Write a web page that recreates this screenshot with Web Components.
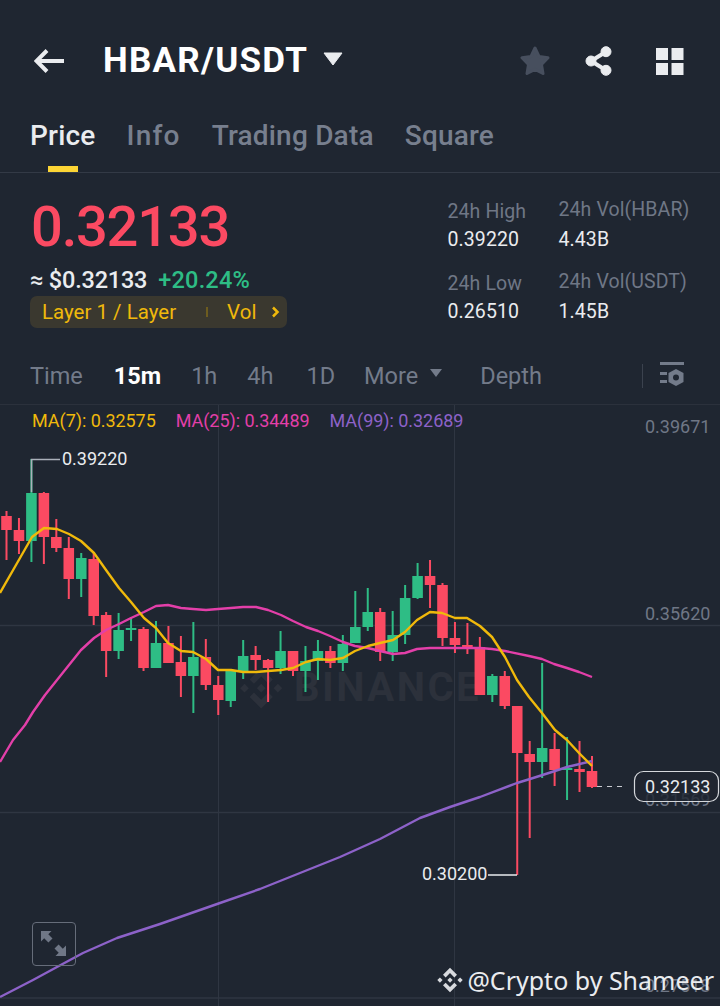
<!DOCTYPE html>
<html lang="en">
<head>
<meta charset="utf-8">
<title>HBAR/USDT</title>
<style>
  html, body { margin: 0; background: #1f2631; }
  body { width: 720px; height: 1006px; overflow: hidden; font-family: Roboto, "Noto Sans", sans-serif; }
</style>
</head>
<body>
<pair-header pair="HBAR/USDT"></pair-header>
<pair-tabs>
  <tab-item active>Price</tab-item>
  <tab-item class="wide">Info</tab-item>
  <tab-item>Trading Data</tab-item>
  <tab-item>Square</tab-item>
</pair-tabs>
<ticker-panel>
  <stat-cell label="24h High" value="0.39220"></stat-cell>
  <stat-cell label="24h Vol(HBAR)" value="4.43B" shift></stat-cell>
  <stat-cell label="24h Low" value="0.26510"></stat-cell>
  <stat-cell label="24h Vol(USDT)" value="1.45B" shift></stat-cell>
</ticker-panel>
<interval-bar></interval-bar>
<kline-chart></kline-chart>

<script>
// logo is used twice (chart watermark + author mark)
const LOGO = `<polygon points="16,13 19,16 16,19 13,16"/><polygon points="4.5,13 7.5,16 4.5,19 1.5,16"/><polygon points="27.5,13 30.5,16 27.5,19 24.5,16"/><polygon points="16,2 24,10 21,13 16,8 11,13 8,10"/><polygon points="16,30 24,22 21,19 16,24 11,19 8,22"/>`;

class PairHeader extends HTMLElement {
  connectedCallback () {
    if (this.shadowRoot) return;
    this.attachShadow({mode: 'open'}).innerHTML = `
    <style>
      :host { display: flex; align-items: center; height: 50px; padding: 36px 36px 0 34px; color: #eaecef; }
      .back { width: 32px; height: 26px; margin-right: 37px; }
      h1 { margin: 0; font: 700 35px/50px Roboto, sans-serif; letter-spacing: 1.25px; color: #fff; }
      .caret { width: 20px; height: 14px; margin-left: 15px; margin-top: -4px; }
      .icons { margin-left: auto; display: flex; align-items: center; gap: 34px; }
    </style>
    <svg class="back" viewBox="0 0 32 26"><path d="M30 13H3M13 2.500L2.500 13 13 23.500" fill="none" stroke="#eaecef" stroke-width="4"/></svg>
    <h1>${this.getAttribute('pair')}</h1>
    <svg class="caret" viewBox="0 0 20 14"><path d="M1 1h18L10 13z" fill="#eaecef" stroke="#eaecef" stroke-linejoin="round"/></svg>
    <div class="icons">
      <svg width="30" height="30" viewBox="0 0 30 30"><polygon points="15,2 19,10.500 28,11.800 21.500,18.500 23,27.500 15,23.300 7,27.500 8.500,18.500 2,11.800 11,10.500" fill="#474f5e" stroke="#474f5e" stroke-width="3" stroke-linejoin="round"/></svg>
      <svg width="30" height="30" viewBox="0 0 30 30"><g fill="#eaecef" stroke="#eaecef"><circle cx="22" cy="5.700" r="5"/><circle cx="7" cy="15" r="5"/><circle cx="22" cy="24.300" r="5"/><path d="M22 5.700L7 15l15 9.300" fill="none" stroke-width="4"/></g></svg>
      <svg width="28" height="28" viewBox="0 0 28 28" style="margin-left:8px"><path d="M0 1h12v12H0zM15.500 1h12v12h-12zM0 16h12v12H0zM15.500 16h12v12h-12z" fill="#eaecef"/></svg>
    </div>`;
  }
}
customElements.define('pair-header', PairHeader);

class PairTabs extends HTMLElement {
  constructor () {
    super();
    this.attachShadow({mode: 'open'}).innerHTML = `
    <style>
      :host { display: flex; gap: 31px; padding: 0 30px; height: 86px; border-bottom: 1px solid #333a46; box-sizing: content-box; }
    </style>
    <slot></slot>`;
  }
}
customElements.define('pair-tabs', PairTabs);

class TabItem extends HTMLElement {
  constructor () {
    super();
    this.attachShadow({mode: 'open'}).innerHTML = `
    <style>
      :host { display: block; position: relative; font: 500 28px/30px Roboto, sans-serif; padding-top: 35px; color: #777f8e; letter-spacing: 0.2px; }
      :host(.wide) { letter-spacing: 1.200px; }
      :host([active]) { color: #eaecef; }
      :host([active])::after { content: ""; position: absolute; left: 18px; bottom: 0; width: 30px; height: 6px; background: #fcd535; }
    </style>
    <slot></slot>`;
  }
}
customElements.define('tab-item', TabItem);

class StatCell extends HTMLElement {
  connectedCallback () {
    if (this.shadowRoot) return;
    this.attachShadow({mode: 'open'}).innerHTML = `
    <style>
      :host { display: block; }
      .l { font: 400 19.500px/28px Roboto, sans-serif; color: #6f7786; white-space: nowrap; letter-spacing: 0.1px; }
      :host([shift]) .l { margin-top: -2px; margin-bottom: 2px; }
      .v { font: 400 19.500px/28px Roboto, sans-serif; color: #eaecef; letter-spacing: 0.1px; }
    </style>
    <div class="l">${this.getAttribute('label')}</div>
    <div class="v">${this.getAttribute('value')}</div>`;
  }
}
customElements.define('stat-cell', StatCell);

class TickerPanel extends HTMLElement {
  constructor () {
    super();
    this.attachShadow({mode: 'open'}).innerHTML = `
    <style>
      :host { display: flex; height: 172px; box-sizing: border-box; padding: 26px 0 0 30px; }
      .left { width: 417.500px; }
      .price { font: 500 56px/56px Roboto, sans-serif; color: #fb4a62; letter-spacing: -1.200px; margin-left: 1px; }
      .sub { display: flex; gap: 11px; font: 500 23.500px/28px Roboto, sans-serif; margin-top: 11px; letter-spacing: 0.2px; }
      .usd { color: #eaecef; letter-spacing: -0.200px; }
      .chg { color: #2ebd85; }
      .tag { display: flex; align-items: center; width: 257px; height: 32px; box-sizing: border-box; margin-top: 2px; padding: 0 12px; border-radius: 7px; background: #3a382f; color: #f0b90b; font: 400 20.500px/32px Roboto, sans-serif; white-space: nowrap; }
      .tag span { flex: none; }
      .tag i { flex: none; width: 1.500px; height: 10px; margin-left: 30px; margin-right: 19.500px; background: #6d5c1f; }
      .tag svg { flex: none; margin-left: 15px; }
      .stats { display: grid; grid-template-columns: 111px 1fr; grid-auto-rows: 56px; row-gap: 16px; margin-top: -1px; }
    </style>
    <div class="left">
      <div class="price">0.32133</div>
      <div class="sub"><span class="usd">≈ $0.32133</span><span class="chg">+20.24%</span></div>
      <div class="tag"><span>Layer 1 / Layer</span><i></i><span>Vol</span><svg width="9" height="12" viewBox="0 0 9 12"><path d="M2 1.500L6.500 6 2 10.500" fill="none" stroke="#f0b90b" stroke-width="2.500"/></svg></div>
    </div>
    <div class="stats"><slot></slot></div>`;
  }
}
customElements.define('ticker-panel', TickerPanel);

class IntervalBar extends HTMLElement {
  constructor () {
    super();
    this.attachShadow({mode: 'open'}).innerHTML = `
    <style>
      :host { display: flex; align-items: center; height: 57px; padding: 2px 36px 0 30px; border-bottom: 1px solid #2b313c; font: 400 23.500px/30px Roboto, sans-serif; color: #737b8a; }
      :host { box-sizing: content-box; }
      span { white-space: nowrap; }
      .on { color: #fff; font-weight: 700; margin-left: 31px; }
      .h1 { margin-left: 30px; } .h4 { margin-left: 30px; } .d1 { margin-left: 33px; } .more { margin-left: 29px; }
      .caret { margin-left: 12px; margin-top: -5px; }
      .depth { margin-left: 38px; }
      .div { width: 1px; height: 24px; margin-left: auto; background: #3b424e; }
      .set { margin-left: 17px; margin-top: -4px; }
    </style>
    <span>Time</span><span class="on">15m</span><span class="h1">1h</span><span class="h4">4h</span><span class="d1">1D</span>
    <span class="more">More</span>
    <svg class="caret" width="12" height="8" viewBox="0 0 12 8"><path d="M0 0h12L6 8z" fill="#737b8a"/></svg>
    <span class="depth">Depth</span>
    <i class="div"></i>
    <svg class="set" width="24" height="24" viewBox="0 0 24 24" fill="#737b8a"><path d="M0 0h24v3H0zM0 10h7v3H0zM0 18h7v3H0z"/><path fill-rule="evenodd" d="M16 7l7.500 4v9L16 24l-7.500-4v-9zM16 12.500a3 3 0 1 0 0 6 3 3 0 0 0 0-6z"/></svg>`;
  }
}
customElements.define('interval-bar', IntervalBar);

// open, close-ish box: [high, bodyTop, bodyBottom, low, up?]
const CANDLES = [
  [511, 516, 530, 560, 0], [518, 530, 541, 554, 0], [459, 493, 541, 562, 1], [492, 493, 537, 564, 0],
  [519, 537, 548, 552, 0], [537, 548, 579, 599, 0], [553, 558, 579, 597, 1], [552, 559, 616, 625, 0],
  [612, 615, 651, 677, 0], [613, 630, 651, 659, 1], [617, 628, 630, 641, 1], [627, 629, 668, 671, 0],
  [621, 643, 668, 668, 1], [626, 643, 663, 663, 0], [636, 662, 676, 697, 0], [622, 657, 676, 713, 1],
  [639, 657, 685, 690, 0], [676, 685, 700, 715, 0], [669, 671, 701, 707, 1], [640, 656, 671, 679, 1],
  [646, 655, 660, 670, 0], [659, 660, 668, 702, 0], [631, 651, 668, 674, 1], [651, 651, 671, 676, 0],
  [646, 661, 671, 692, 1], [640, 651, 661, 680, 1], [646, 651, 663, 668, 0], [635, 644, 663, 671, 1],
  [591, 627, 643, 643, 1], [588, 612, 627, 631, 1], [608, 612, 652, 661, 0], [611, 635, 652, 661, 1],
  [585, 598, 635, 644, 1], [563, 576, 598, 599, 1], [560, 576, 585, 608, 0], [583, 585, 638, 646, 0],
  [622, 638, 645, 653, 0], [623, 645, 647, 654, 0], [637, 647, 695, 695, 0], [674, 676, 695, 702, 1],
  [671, 676, 706, 709, 0], [706, 706, 753, 875, 0], [741, 754, 762, 838, 0], [663, 748, 762, 778, 1],
  [733, 749, 770, 786, 0], [737, 768, 770, 800, 1], [741, 769, 772, 792, 0], [756, 771, 787, 788, 0]
];
const MA7 = '0,593 16,565 32,537 44,528 57,529 69,534 81,541 94,553 106,570 119,588 131,602 144,618 156,628 168,643 181,651 193,652 206,659 218,670 231,670 243,672 256,672 268,671 281,670 293,668 306,662 318,659 330,660 343,658 355,651 368,646 380,643 393,640 405,632 417,620 430,612 442,613 455,618 467,618 480,626 492,637 505,657 517,680 529,697 542,713 555,730 567,740 579,753 592,766';
const MA25 = '0,762 13,740 25,725 33,712 45,695 57,680 69,665 81,650 94,638 106,630 119,624 131,618 144,612 156,606 168,605 181,608 193,609 206,610 218,609 231,608 243,607 256,607 268,610 281,615 293,621 306,627 318,631 330,636 343,642 355,646 368,648 380,651 393,654 405,653 417,649 430,648 455,648 480,648 492,649 505,651 529,656 542,659 554,664 567,668 579,672 592,677';
const MA99 = '0,997 33,980 57,967 83,953 117,938 160,924 220,903 260,889 300,873 340,857 380,839 420,818 450,807 480,797 517,783 530,779 555,771 567,767 592,761';

class KlineChart extends HTMLElement {
  constructor () {
    super();
    const bars = CANDLES.map((c, i) => {
      const x = 6.5 + i * 12.457;
      const col = c[4] ? '#2ebd85' : '#fb4a62';
      return `<path d="M${x} ${c[0]}V${c[3]}" stroke="${col}" stroke-width="2"/><rect x="${x - 5.3}" y="${c[1]}" width="10.600" height="${Math.max(c[2] - c[1], 2)}" fill="${col}"/>`;
    }).join('');
    this.attachShadow({mode: 'open'}).innerHTML = `
    <style>
      :host { display: block; position: relative; height: 601px; }
      .legend { position: relative; display: flex; gap: 20px; padding: 5px 0 0 32px; font: 400 18px/22px Roboto, sans-serif; letter-spacing: -0.050px; }
      svg.canvas { position: absolute; left: 0; top: 0; }
      text { font-family: Roboto, sans-serif; font-size: 18px; }
      .axis { fill: #6f7786; }
      .mark { fill: #eaecef; }
      .line { fill: none; stroke-width: 2.400; stroke-linejoin: round; }
      .author { position: absolute; right: 6px; bottom: 10px; display: flex; align-items: center; gap: 3px; font: 400 25px/32px "Noto Sans", sans-serif; color: #eaecef; }
      .expand { position: absolute; left: 32px; top: 517px; width: 42px; height: 42px; border: 1px solid #666d7a; border-radius: 4px; display: flex; align-items: center; justify-content: center; }
    </style>
    <svg class="canvas" width="720" height="601" viewBox="0 405 720 601">
      <path d="M0 625.500H720M0 812.500H720M0 998H720" stroke="#2f3642" stroke-width="1.500"/>
      <path d="M218.500 405V1006M454.500 405V1006" stroke="#2f3642"/>
      <g fill="#2c313b" transform="translate(238 665) scale(1.45)">${LOGO}</g>
      <text x="294" y="701" font-weight="700" style="font-size:40px" letter-spacing="2.500" fill="#2c313b">BINANCE</text>
      ${bars}
      <polyline class="line" points="${MA99}" stroke="#8d62c9"/>
      <polyline class="line" points="${MA25}" stroke="#e33fa9"/>
      <polyline class="line" points="${MA7}" stroke="#f0b90b"/>
      <text class="axis" x="645" y="433">0.39671</text>
      <text class="axis" x="645" y="620">0.35620</text>
      <text class="axis" x="645" y="806">0.31569</text>
      <text class="axis" x="645" y="992">0.27518</text>
      <path d="M31.500 492V459.500H60" fill="none" stroke="#aab0ba" stroke-width="1.500"/>
      <text class="mark" x="62" y="465">0.39220</text>
      <path d="M488 875H517" fill="none" stroke="#eaecef" stroke-width="1.500"/>
      <text class="mark" x="422" y="880">0.30200</text>
      <path d="M597 786.500H626" stroke="#c8ccd2" stroke-dasharray="5 5"/>
      <rect x="634.500" y="771.500" width="84" height="30" rx="9" fill="#1f2631" fill-opacity="0.8" stroke="#d5d8dc" stroke-width="1.200"/>
      <text class="mark" x="645" y="793">0.32133</text>
    </svg>
    <div class="legend">
      <span style="color:#f0b90b">MA(7): 0.32575</span>
      <span style="color:#e33fa9">MA(25): 0.34489</span>
      <span style="color:#8d62c9">MA(99): 0.32689</span>
    </div>
    <div class="expand"><svg width="26" height="26" viewBox="0 0 26 26" fill="#6f7786"><polygon points="0,0 10.500,0 7.300,3.200 11.500,7.400 7.400,11.500 3.200,7.300 0,10.500"/><polygon points="25,25 14.500,25 17.700,21.800 13.500,17.600 17.600,13.500 21.800,17.700 25,14.500"/></svg></div>
    <div class="author"><svg width="28" height="28" viewBox="0 0 32 32" fill="#d8dade">${LOGO}</svg><span>@Crypto by Shameer</span></div>`;
  }
}
customElements.define('kline-chart', KlineChart);
</script>
</body>
</html>
